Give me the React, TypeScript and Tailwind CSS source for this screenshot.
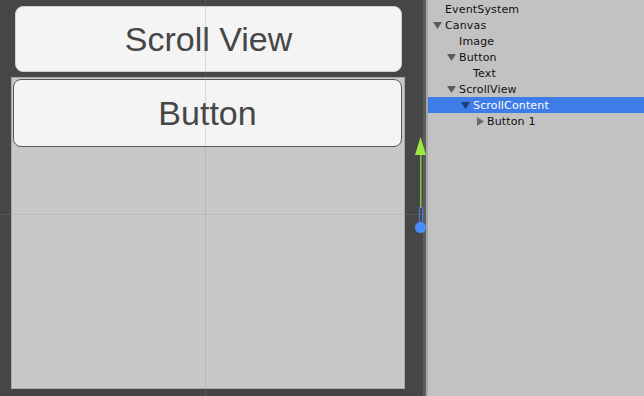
import React from "react";

type Node = { name: string; level: number; open?: boolean; closed?: boolean; selected?: boolean };

const nodes: Node[] = [
  { name: "EventSystem", level: 0 },
  { name: "Canvas", level: 0, open: true },
  { name: "Image", level: 1 },
  { name: "Button", level: 1, open: true },
  { name: "Text", level: 2 },
  { name: "ScrollView", level: 1, open: true },
  { name: "ScrollContent", level: 2, open: true, selected: true },
  { name: "Button 1", level: 3, closed: true },
];

const indents = ["pl-[17px]", "pl-[31px]", "pl-[45px]", "pl-[59px]"];

const Row = ({ node }: { node: Node }) => {
  return (
    <div
      className={`flex items-center h-[16px] ${indents[node.level]} ${
        node.selected ? "bg-[#3e7de7] text-white" : "text-[#111]"
      }`}
    >
      <div className="w-[12px] h-[16px] -ml-[12px] flex items-center">
        {node.open && (
          <svg width="9" height="7" viewBox="0 0 9 7" className="mt-[1px]">
            <polygon points="0,0 9,0 4.5,7" fill={node.selected ? "#1d3c78" : "#5c5c5c"} />
          </svg>
        )}
        {node.closed && (
          <svg width="7" height="9" viewBox="0 0 7 9" className="ml-[2px] mt-[1px]">
            <polygon points="0,0 7,4.5 0,9" fill="#6a6a6a" />
          </svg>
        )}
      </div>
      <span className="leading-[16px] mt-[2px] tracking-[0.15px]">{node.name}</span>
    </div>
  );
};

const App = () => {
  return (
    <div className="relative flex w-[644px] h-[396px] overflow-hidden font-['Liberation_Sans',Arial,sans-serif]">
      {/* scene view */}
      <div className="relative w-[423px] h-full bg-[#464646]">
        <div className="ml-[15px] mt-[6px] w-[387px] h-[66px] rounded-[8px] bg-[#f4f4f4] border border-[#d0d0d0] flex items-center justify-center text-[34px] text-[#464646]">
          Scroll View
        </div>
        <div className="ml-[11px] mt-[5px] w-[394px] h-[312px] bg-[#c8c8c8] border border-[#a8a8a8] pl-[1px] pt-[1px]">
          <div className="w-[389px] h-[68px] rounded-[8px] bg-[#f4f4f4] border-[1.5px] border-[#585858] flex items-center justify-center text-[34px] text-[#464646]">
            Button
          </div>
        </div>
        {/* guide lines */}
        <div className="absolute left-[205px] top-0 w-px h-full bg-[#8c8c8c]/25" />
        <div className="absolute left-0 top-[214px] h-px w-full bg-[#8c8c8c]/25" />
      </div>

      {/* splitter */}
      <div className="w-[3px] h-full bg-[#5c5c5c]" />
      <div className="w-[2px] h-full bg-[#a5a5a5]" />

      {/* hierarchy */}
      <div className="flex-1 h-full bg-[#c2c2c2] pt-[1px] font-['DejaVu_Sans',Verdana,sans-serif] text-[11px]">
        {nodes.map((n) => (
          <Row key={n.name} node={n} />
        ))}
      </div>

      {/* move gizmo */}
      <svg className="absolute left-[410px] top-[130px]" width="22" height="110" viewBox="410 130 22 110">
        <line x1="420.8" y1="152" x2="420.8" y2="208" stroke="#86c247" strokeWidth="1.6" />
        <polygon points="420.5,137 426,155 415,155" fill="#9de83e" />
        <rect x="419.5" y="207.5" width="3" height="15" fill="none" stroke="#4b80e0" strokeWidth="1" />
        <circle cx="420.5" cy="227.5" r="5.6" fill="#4a8bff" />
      </svg>
    </div>
  );
};

export default App;
